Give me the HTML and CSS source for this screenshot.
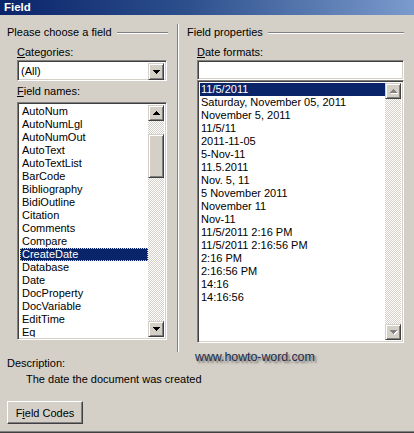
FILE: index.html
```html
<!DOCTYPE html>
<html>
<head>
<meta charset="utf-8">
<link rel="stylesheet" href="styles.css">
</head>
<body>
<div class="dialog">
  <div class="titlebar">Field</div>
  <div class="main">
    <section class="col col-left">
      <div class="group-head"><span>Please choose a field</span><i class="etch"></i></div>
      <div class="group-body">
        <div class="label"><u>C</u>ategories:</div>
        <div class="combo">
          <span class="combo-text">(All)</span>
          <span class="combo-btn"><svg class="arrow" width="7" height="4" viewBox="0 0 7 4"><path d="M0 0h7v1h-7zM1 1h5v1h-5zM2 2h3v1h-3zM3 3h1v1h-1z"/></svg></span>
        </div>
        <div class="label label-gap"><u>F</u>ield names:</div>
        <div class="listbox lb-fields">
          <ul class="items">
            <li>AutoNum</li>
            <li>AutoNumLgl</li>
            <li>AutoNumOut</li>
            <li>AutoText</li>
            <li>AutoTextList</li>
            <li>BarCode</li>
            <li>Bibliography</li>
            <li>BidiOutline</li>
            <li>Citation</li>
            <li>Comments</li>
            <li>Compare</li>
            <li class="sel focus">CreateDate</li>
            <li>Database</li>
            <li>Date</li>
            <li>DocProperty</li>
            <li>DocVariable</li>
            <li>EditTime</li>
            <li>Eq</li>
          </ul>
          <div class="scrollbar">
            <div class="sb-btn"><svg class="arrow" width="7" height="4" viewBox="0 0 7 4"><path d="M3 0h1v1h-1zM2 1h3v1h-3zM1 2h5v1h-5zM0 3h7v1h-7z"/></svg></div>
            <div class="sb-track sb-gap"></div>
            <div class="sb-thumb"></div>
            <div class="sb-track sb-fill"></div>
            <div class="sb-btn"><svg class="arrow" width="7" height="4" viewBox="0 0 7 4"><path d="M0 0h7v1h-7zM1 1h5v1h-5zM2 2h3v1h-3zM3 3h1v1h-1z"/></svg></div>
          </div>
        </div>
      </div>
    </section>
    <div class="vsep"></div>
    <section class="col col-right">
      <div class="group-head"><span>Field properties</span><i class="etch"></i></div>
      <div class="group-body">
        <div class="label"><u>D</u>ate formats:</div>
        <div class="textbox"></div>
        <div class="listbox lb-dates">
          <ul class="items">
            <li class="sel">11/5/2011</li>
            <li>Saturday, November 05, 2011</li>
            <li>November 5, 2011</li>
            <li>11/5/11</li>
            <li>2011-11-05</li>
            <li>5-Nov-11</li>
            <li>11.5.2011</li>
            <li>Nov. 5, 11</li>
            <li>5 November 2011</li>
            <li>November 11</li>
            <li>Nov-11</li>
            <li>11/5/2011 2:16 PM</li>
            <li>11/5/2011 2:16:56 PM</li>
            <li>2:16 PM</li>
            <li>2:16:56 PM</li>
            <li>14:16</li>
            <li>14:16:56</li>
          </ul>
          <div class="scrollbar disabled">
            <div class="sb-btn"><svg class="arrow" width="8" height="5" viewBox="0 0 8 5"><path class="hl" d="M4 1h1v1h-1zM3 2h3v1h-3zM2 3h5v1h-5zM1 4h7v1h-7z"/><path class="sh" d="M3 0h1v1h-1zM2 1h3v1h-3zM1 2h5v1h-5zM0 3h7v1h-7z"/></svg></div>
            <div class="sb-track sb-fill"></div>
            <div class="sb-btn"><svg class="arrow" width="8" height="5" viewBox="0 0 8 5"><path class="hl" d="M1 1h7v1h-7zM2 2h5v1h-5zM3 3h3v1h-3zM4 4h1v1h-1z"/><path class="sh" d="M0 0h7v1h-7zM1 1h5v1h-5zM2 2h3v1h-3zM3 3h1v1h-1z"/></svg></div>
          </div>
        </div>
      </div>
    </section>
  </div>
  <div class="desc">
    <div class="desc-label">Description:</div>
    <div class="desc-text">The date the document was created</div>
  </div>
  <div class="footer">
    <button class="btn">F<u>i</u>eld Codes</button>
  </div>
  <div class="watermark">www.howto-word.com</div>
</div>
</body>
</html>
```
FILE: styles.css
```css
* { box-sizing: border-box; }
html, body { margin: 0; padding: 0; }
body {
  font-family: "Liberation Sans", Arial, sans-serif;
  font-size: 11px;
  color: #000;
  background: #D4D0C8;
}
.dialog {
  position: relative;
  width: 414px;
  height: 433px;
  background: #D4D0C8;
  display: flex;
  flex-direction: column;
  border-bottom: 1px solid #404040;
  box-shadow: inset 0 -1px 0 #808080;
  overflow: hidden;
}
.titlebar {
  height: 15px;
  line-height: 15px;
  padding-left: 4px;
  color: #fff;
  font-weight: bold;
  font-size: 11.5px;
  background: linear-gradient(to right, #0A246A 0%, #2d4f8c 45%, #7b9bcd 100%);
}
.main {
  margin-top: 9px;
  height: 328px;
  display: flex;
}
.col { padding-top: 2px; }
.col-left { width: 177px; padding-left: 7px; padding-right: 9px; }
.col-right { flex: 1; padding-left: 8px; padding-right: 10px; }
.vsep {
  width: 2px;
  border-left: 1px solid #808080;
  border-right: 1px solid #fff;
}
.group-head {
  display: flex;
  align-items: center;
  gap: 5px;
  height: 13px;
  line-height: 13px;
  white-space: nowrap;
}
.etch {
  flex: 1;
  height: 2px;
  border-top: 1px solid #808080;
  border-bottom: 1px solid #fff;
}
.group-body { margin-top: 7px; padding-left: 10px; }
.col-left .group-body { padding-right: 1px; }
.label { height: 13px; line-height: 13px; }
u { text-decoration: underline; text-underline-offset: 1px; }
.label-gap { margin-top: 4px; }

.combo, .textbox, .listbox {
  border: 1px solid;
  border-color: #808080 #fff #fff #808080;
  box-shadow: inset 1px 1px 0 #404040, inset -1px -1px 0 #D4D0C8;
  background: #fff;
}
.combo {
  margin-top: 1px;
  height: 21px;
  display: flex;
  align-items: stretch;
  padding: 2px;
}
.combo-text { flex: 1; line-height: 17px; padding-left: 1px; }
.combo-btn, .sb-btn {
  width: 16px;
  display: flex;
  align-items: center;
  justify-content: center;
  background: #D4D0C8;
  border: 1px solid;
  border-color: #D4D0C8 #404040 #404040 #D4D0C8;
  box-shadow: inset 1px 1px 0 #fff, inset -1px -1px 0 #808080;
}
.combo-btn { height: 17px; }
.arrow { display: block; shape-rendering: crispEdges; fill: #000; }

.textbox { margin-top: 1px; height: 20px; }

.listbox {
  display: flex;
  padding: 2px;
  overflow: hidden;
}
.lb-fields { margin-top: 4px; height: 238px; }
.lb-dates { height: 263px; }
.items {
  list-style: none;
  margin: 0;
  padding: 0;
  flex: 1;
  min-width: 0;
  overflow: hidden;
}
.items li {
  height: 13px;
  line-height: 13px;
  padding-left: 2px;
  white-space: nowrap;
}
.lb-dates .items li { padding-left: 1px; }
.items li.sel { background: #0A246A; color: #fff; }
.items li.focus { outline: 1px dotted #e8d27a; outline-offset: -1px; }

.scrollbar {
  width: 16px;
  display: flex;
  flex-direction: column;
}
.sb-btn { height: 16px; flex: none; }
.sb-track {
  background: repeating-conic-gradient(#D4D0C8 0 25%, #fff 0 50%) 0 0 / 2px 2px;
}
.sb-gap { height: 13px; flex: none; }
.sb-fill { flex: 1; }
.sb-thumb {
  height: 44px;
  flex: none;
  background: #D4D0C8;
  border: 1px solid;
  border-color: #D4D0C8 #404040 #404040 #D4D0C8;
  box-shadow: inset 1px 1px 0 #fff, inset -1px -1px 0 #808080;
}
.disabled .arrow .hl { fill: #fff; }
.disabled .arrow .sh { fill: #808080; }
.disabled .sb-btn svg { margin: 1px 0 0 1px; }

.desc { margin-top: 5px; padding-left: 7px; }
.desc-label { height: 13px; line-height: 13px; }
.desc-text { margin-top: 3px; padding-left: 19px; height: 13px; line-height: 13px; }

.footer { margin-top: 15px; padding-left: 7px; }
.btn {
  width: 76px;
  height: 23px;
  padding: 0;
  font: inherit;
  color: #000;
  background: #D4D0C8;
  border: 1px solid;
  border-color: #fff #404040 #404040 #fff;
  box-shadow: inset -1px -1px 0 #808080;
  text-align: center;
}

.watermark {
  position: absolute;
  left: 195px;
  top: 350px;
  font-family: "Liberation Sans", Arial, sans-serif;
  font-size: 12.5px;
  color: #1d2c4c;
  text-shadow: 2px 2px 2px rgba(40, 40, 40, 0.55);
  letter-spacing: -0.1px;
}
```
